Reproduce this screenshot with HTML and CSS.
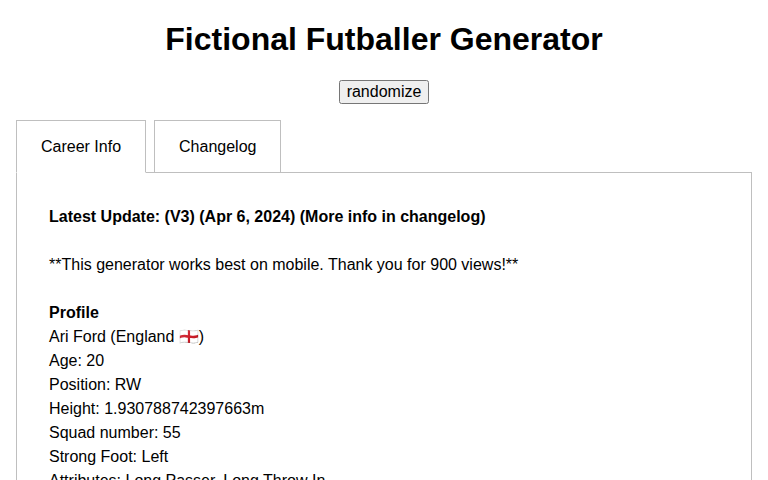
FILE: index.html
```html
<!DOCTYPE html>
<html lang="en">
<head>
    <meta charset="UTF-8">
    <meta name="viewport" content="width=device-width, initial-scale=1.0">
    <title>Fictional Futballer Generator</title>
    <link rel="stylesheet" href="styles.css">
</head>
<body>
    <h1>Fictional Futballer Generator</h1>

    <p class="controls">
        <button id="randomize">randomize</button>
    </p>

    <div class="tabs">
        <button class="tab active">Career Info</button>
        <button class="tab">Changelog</button>
    </div>

    <!-- Career info panel -->
    <div class="tab-panel">
        <p class="update"><b>Latest Update: (V3) (Apr 6, 2024) (More info in changelog)</b></p>
        <p>**This generator works best on mobile. Thank you for 900 views!**</p>
        <div class="profile">
            <b>Profile</b><br>
            Ari Ford (England 🏴󠁧󠁢󠁥󠁮󠁧󠁿)<br>
            Age: 20<br>
            Position: RW<br>
            Height: 1.930788742397663m<br>
            Squad number: 55<br>
            Strong Foot: Left<br>
            Attributes: Long Passer, Long Throw In<br>
            Overall: 71<br>
            Potential: 84
        </div>
    </div>
</body>
</html>
```

FILE: styles.css
```css
:root {
    --border-color: #bfbfbf;
    --text-color: #000;
}

body {
    font-family: "Liberation Sans", Arial, sans-serif;
    font-size: 16px;
    margin: 0 16px 16px;
    color: var(--text-color);
}

h1 {
    text-align: center;
    font-size: 32px;
    margin: 0.67em 0;
}

.controls {
    text-align: center;
    margin: 16px 0;
}

.controls button {
    font-family: inherit;
    font-size: 16px;
}

.tabs {
    display: flex;
    gap: 8px;
    margin-bottom: -1px;
}

.tab {
    font-family: inherit;
    font-size: 16px;
    line-height: 24px;
    color: var(--text-color);
    background-color: #fff;
    border: 1px solid var(--border-color);
    padding: 14px 24px 13px;
    cursor: pointer;
}

.tab.active {
    border-bottom-color: #fff;
    position: relative;
    z-index: 1;
}

.tab-panel {
    border: 1px solid var(--border-color);
    padding: 32px;
    line-height: 24px;
}

.tab-panel p {
    margin: 0 0 24px;
}
```
